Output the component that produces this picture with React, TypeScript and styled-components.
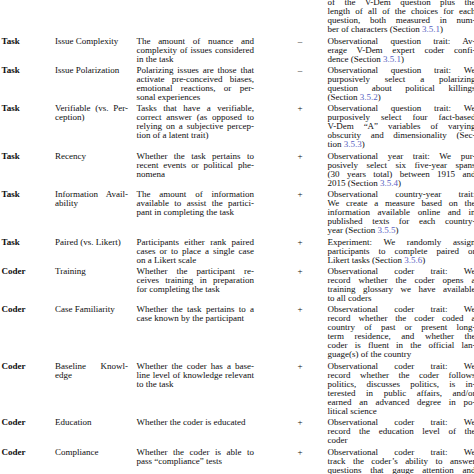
import React from "react";
import styled, { createGlobalStyle } from "styled-components";

const GlobalStyle = createGlobalStyle`
  html, body {
    margin: 0;
    padding: 0;
    background: #fff;
    overflow: hidden;
  }
`;

const Page = styled.div`
  width: 474px;
  height: 474px;
  overflow: hidden;
  background: #fff;
  font-family: "Liberation Serif", "Times New Roman", serif;
  font-size: 9px;
  line-height: 9px;
  color: #0e0e0e;
`;

const Table = styled.div`
  display: flex;
  flex-direction: column;
  gap: 2.4px;
  margin-top: -1.8px;
  padding-left: 1.5px;
`;

const Row = styled.div`
  display: grid;
  grid-template-columns: 53.5px 81.5px 117.5px 73.5px 148px;
  align-items: start;
`;

const Group = styled.div`
  font-weight: 700;
`;

const Cell = styled.div<{ $padRight?: number }>`
  display: flex;
  flex-direction: column;
  padding-right: ${p => p.$padRight || 0}px;
`;

const Sign = styled.div`
  padding-left: 18.5px;
  text-align: center;
`;

const Line = styled.div<{ $fill: boolean }>`
  text-align: ${p => (p.$fill ? "justify" : "left")};
  text-align-last: ${p => (p.$fill ? "justify" : "left")};
`;

const Ref = styled.span`
  color: #5862c2;
`;

interface Entry {
  group?: string;
  name?: string[];
  desc?: string[];
  sign?: string;
  obs: string[];
  open?: boolean;
}

const rows: Entry[] = [
  {
    obs: [
      "of the V-Dem question plus the",
      "length of all of the choices for each",
      "question, both measured in num-",
      "ber of characters (Section 3.5.1)",
    ],
  },
  {
    group: "Task",
    name: ["Issue Complexity"],
    desc: ["The amount of nuance and", "complexity of issues considered", "in the task"],
    sign: "–",
    obs: ["Observational question trait: Av-", "erage V-Dem expert coder confi-", "dence (Section 3.5.1)"],
  },
  {
    group: "Task",
    name: ["Issue Polarization"],
    desc: [
      "Polarizing issues are those that",
      "activate pre-conceived biases,",
      "emotional reactions, or per-",
      "sonal experiences",
    ],
    sign: "–",
    obs: [
      "Observational question trait: We",
      "purposively select a polarizing",
      "question about political killings",
      "(Section 3.5.2)",
    ],
  },
  {
    group: "Task",
    name: ["Verifiable (vs. Per-", "ception)"],
    desc: [
      "Tasks that have a verifiable,",
      "correct answer (as opposed to",
      "relying on a subjective percep-",
      "tion of a latent trait)",
    ],
    sign: "+",
    obs: [
      "Observational question trait: We",
      "purposively select four fact-based",
      "V-Dem \u201CA\u201D variables of varying",
      "obscurity and dimensionality (Sec-",
      "tion 3.5.3)",
    ],
  },
  {
    group: "Task",
    name: ["Recency"],
    desc: ["Whether the task pertains to", "recent events or political phe-", "nomena"],
    sign: "+",
    obs: [
      "Observational year trait: We pur-",
      "posively select six five-year spans",
      "(30 years total) between 1915 and",
      "2015 (Section 3.5.4)",
    ],
  },
  {
    group: "Task",
    name: ["Information Avail-", "ability"],
    desc: ["The amount of information", "available to assist the partici-", "pant in completing the task"],
    sign: "+",
    obs: [
      "Observational country-year trait:",
      "We create a measure based on the",
      "information available online and in",
      "published texts for each country-",
      "year (Section 3.5.5)",
    ],
  },
  {
    group: "Task",
    name: ["Paired (vs. Likert)"],
    desc: ["Participants either rank paired", "cases or to place a single case", "on a Likert scale"],
    sign: "+",
    obs: [
      "Experiment: We randomly assign",
      "participants to complete paired or",
      "Likert tasks (Section 3.5.6)",
    ],
  },
  {
    group: "Coder",
    name: ["Training"],
    desc: ["Whether the participant re-", "ceives training in preparation", "for completing the task"],
    sign: "+",
    obs: [
      "Observational coder trait: We",
      "record whether the coder opens a",
      "training glossary we have available",
      "to all coders",
    ],
  },
  {
    group: "Coder",
    name: ["Case Familiarity"],
    desc: ["Whether the task pertains to a", "case known by the participant"],
    sign: "+",
    obs: [
      "Observational coder trait: We",
      "record whether the coder coded a",
      "country of past or present long-",
      "term residence, and whether the",
      "coder is fluent in the official lan-",
      "guage(s) of the country",
    ],
  },
  {
    group: "Coder",
    name: ["Baseline Knowl-", "edge"],
    desc: ["Whether the coder has a base-", "line level of knowledge relevant", "to the task"],
    sign: "+",
    obs: [
      "Observational coder trait: We",
      "record whether the coder follows",
      "politics, discusses politics, is in-",
      "terested in public affairs, and/or",
      "earned an advanced degree in po-",
      "litical science",
    ],
  },
  {
    group: "Coder",
    name: ["Education"],
    desc: ["Whether the coder is educated"],
    sign: "+",
    obs: ["Observational coder trait: We", "record the education level of the", "coder"],
  },
  {
    group: "Coder",
    name: ["Compliance"],
    desc: ["Whether the coder is able to", "pass \u201Ccompliance\u201D tests"],
    sign: "+",
    obs: [
      "Observational coder trait: We",
      "track the coder\u2019s ability to answer",
      "questions that gauge attention and",
    ],
    open: true,
  },
];

// wraps section numbers in the link colour
const withRefs = (text: string) =>
  text.split(/(3\.5\.\d)/).map((part, i) =>
    /^3\.5\.\d$/.test(part) ? <Ref key={i}>{part}</Ref> : <React.Fragment key={i}>{part}</React.Fragment>
  );

const Paragraph: React.FC<{ lines?: string[]; open?: boolean; padRight?: number }> = ({
  lines = [],
  open,
  padRight,
}) => (
  <Cell $padRight={padRight}>
    {lines.map((l, i) => (
      <Line key={i} $fill={open || i < lines.length - 1}>
        {withRefs(l)}
      </Line>
    ))}
  </Cell>
);

const App: React.FC = () => {
  return (
    <Page>
      <GlobalStyle />
      <Table>
        {rows.map((r, i) => (
          <Row key={i}>
            <Group>{r.group}</Group>
            <Paragraph lines={r.name} padRight={8.5} />
            <Paragraph lines={r.desc} />
            <Sign>{r.sign}</Sign>
            <Paragraph lines={r.obs} open={r.open} />
          </Row>
        ))}
      </Table>
    </Page>
  );
};

export default App;
